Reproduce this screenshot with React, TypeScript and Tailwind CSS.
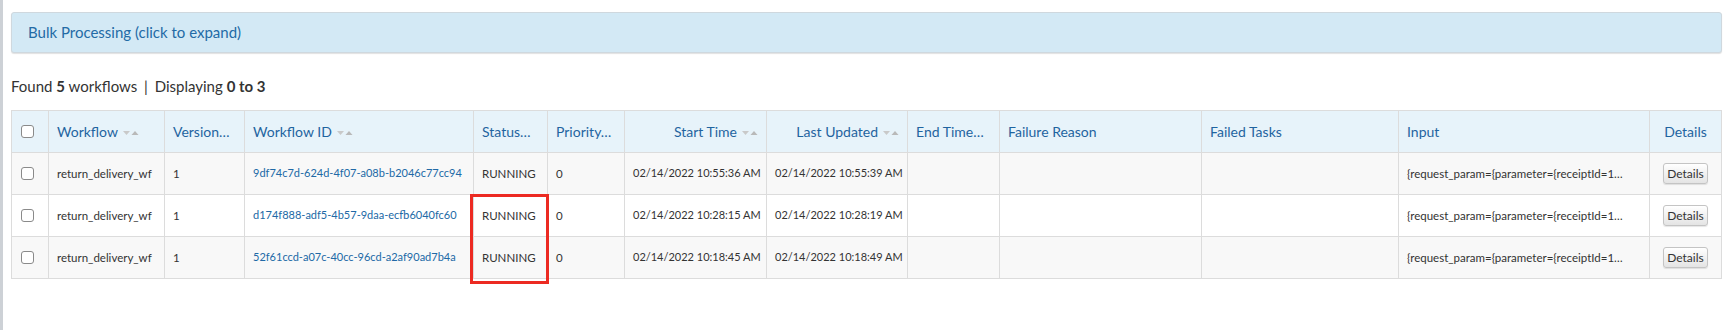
import React from "react";

const ROWS = [
  {
    name: "return_delivery_wf",
    version: "1",
    id: "9df74c7d-624d-4f07-a08b-b2046c77cc94",
    status: "RUNNING",
    priority: "0",
    start: "02/14/2022 10:55:36 AM",
    updated: "02/14/2022 10:55:39 AM",
  },
  {
    name: "return_delivery_wf",
    version: "1",
    id: "d174f888-adf5-4b57-9daa-ecfb6040fc60",
    status: "RUNNING",
    priority: "0",
    start: "02/14/2022 10:28:15 AM",
    updated: "02/14/2022 10:28:19 AM",
  },
  {
    name: "return_delivery_wf",
    version: "1",
    id: "52f61ccd-a07c-40cc-96cd-a2af90ad7b4a",
    status: "RUNNING",
    priority: "0",
    start: "02/14/2022 10:18:45 AM",
    updated: "02/14/2022 10:18:49 AM",
  },
];

// shown already shortened, as the list view does
const INPUT = "{request_param={parameter={receiptId=1…";

function SortIcon() {
  return (
    <svg width="16" height="8" viewBox="0 0 16 8" className="inline-block ml-[5px] align-middle">
      <polygon points="0,2 7,2 3.5,6" fill="#c9c9c9" />
      <polygon points="8.5,6 15.5,6 12,2" fill="#b9b9b9" />
    </svg>
  );
}

function Checkbox() {
  return <span className="block w-[13px] h-[13px] rounded-[3px] border border-[#8a8a8a] bg-white" />;
}

const th = "border border-[#dcdcdc] px-[8px] font-normal text-[#1f64a0] whitespace-nowrap overflow-hidden";
const td = "border border-[#dcdcdc] px-[8px] whitespace-nowrap overflow-hidden";

export default function App() {
  return (
    <div className="min-h-screen bg-white font-['Lato',sans-serif] text-[#333]">
      <div className="flex min-h-screen">
        {/* left page edge */}
        <div className="w-[3px] shrink-0 bg-[#cdd1d6]" />
        <div className="flex-1 pl-[8px] pr-[11px] pt-[12px]">
          <div className="h-[41px] flex items-center px-[16px] rounded-[3px] border border-[#cfd8de] bg-[#d3e9f5] shadow-[0_1px_1px_rgba(0,0,0,0.12)] text-[15px] text-[#236ba6] cursor-pointer">
            Bulk Processing (click to expand)
          </div>

          <div className="mt-[26px] text-[15px] leading-none text-[#333]">
            Found <b>5</b> workflows <span className="mx-[3px]">|</span> Displaying <b>0 to 3</b>
          </div>

          <div className="relative mt-[16px]">
            <table className="w-full table-fixed border-collapse">
              <colgroup>
                <col className="w-[37px]" />
                <col className="w-[116px]" />
                <col className="w-[80px]" />
                <col className="w-[229px]" />
                <col className="w-[74px]" />
                <col className="w-[77px]" />
                <col className="w-[142px]" />
                <col className="w-[141px]" />
                <col className="w-[92px]" />
                <col className="w-[202px]" />
                <col className="w-[197px]" />
                <col className="w-[251px]" />
                <col className="w-[72px]" />
              </colgroup>
              <thead>
                <tr className="h-[42px] bg-[#e7f3fa] text-[14px]">
                  <th className={`${th} pl-[9px]`}>
                    <Checkbox />
                  </th>
                  <th className={`${th} text-left`}>
                    Workflow
                    <SortIcon />
                  </th>
                  <th className={`${th} text-left`}>Version…</th>
                  <th className={`${th} text-left`}>
                    Workflow ID
                    <SortIcon />
                  </th>
                  <th className={`${th} text-left`}>Status…</th>
                  <th className={`${th} text-left`}>Priority…</th>
                  <th className={`${th} text-right`}>
                    Start Time
                    <SortIcon />
                  </th>
                  <th className={`${th} text-right`}>
                    Last Updated
                    <SortIcon />
                  </th>
                  <th className={`${th} text-left`}>End Time…</th>
                  <th className={`${th} text-left`}>Failure Reason</th>
                  <th className={`${th} text-left`}>Failed Tasks</th>
                  <th className={`${th} text-left`}>Input</th>
                  <th className={`${th} text-center`}>Details</th>
                </tr>
              </thead>
              <tbody className="text-[11.5px]">
                {ROWS.map((r, i) => (
                  <tr key={r.id} className={`h-[42px] ${i % 2 === 0 ? "bg-[#f8f8f8]" : "bg-white"}`}>
                    <td className={`${td} pl-[9px]`}>
                      <Checkbox />
                    </td>
                    <td className={td}>{r.name}</td>
                    <td className={td}>{r.version}</td>
                    <td className={`${td} text-[11px]`}>
                      <a className="text-[#2169a6]">{r.id}</a>
                    </td>
                    <td className={td}>{r.status}</td>
                    <td className={td}>{r.priority}</td>
                    <td className={`${td} text-right text-[11px] pr-[9px]`}>{r.start}</td>
                    <td className={`${td} text-right text-[11px] pr-[9px]`}>{r.updated}</td>
                    <td className={td} />
                    <td className={td} />
                    <td className={td} />
                    <td className={td}>{INPUT}</td>
                    <td className={`${td} text-center`}>
                      <button className="h-[21px] w-[45px] rounded-[3px] border border-[#c4c4c4] bg-gradient-to-b from-white to-[#e4e4e4] text-[12px] text-[#333] shadow-[0_1px_1px_rgba(0,0,0,0.1)]">
                        Details
                      </button>
                    </td>
                  </tr>
                ))}
              </tbody>
            </table>
            {/* highlight box drawn over the status cells */}
            <div className="absolute left-[459px] top-[84px] w-[79px] h-[90px] border-[3px] border-[#ec2a22] pointer-events-none" />
          </div>
        </div>
      </div>
    </div>
  );
}
